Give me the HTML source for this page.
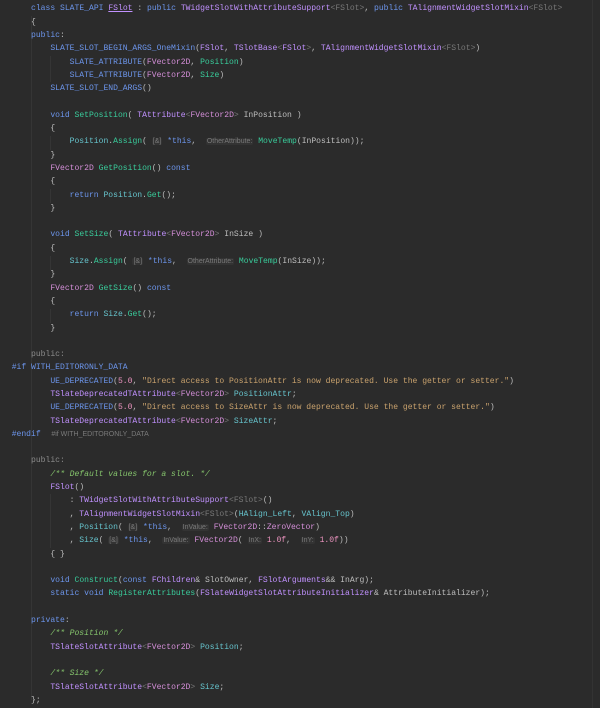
<!DOCTYPE html>
<html><head><meta charset="utf-8"><style>
html,body{margin:0;padding:0;background:#2b2b2b;width:600px;height:708px;overflow:hidden}
pre{position:absolute;left:11.7px;top:2.4px;margin:0;font:8.05px/13.29px "Liberation Mono",monospace;color:#bdbdbd;font-weight:normal;letter-spacing:0}
.k{color:#6c95eb}.c{color:#c191ff}.t{color:#d58fd9}.f{color:#66c3cc}.m{color:#39cc9b}.s{color:#c9a26d}.n{color:#ed94c0}.cm{color:#85c46c;font-style:italic}.g{color:#787878}.d{color:#8a8a8a}
.h{font:7px "Liberation Sans",sans-serif;color:#7a7a7a;background:#333;border-radius:2px;padding:0 1px}
.ig{position:absolute;width:1px;background:#353535}
.rm{position:absolute;left:592px;top:0;width:1px;height:708px;background:#333}
</style></head><body>
<div class="rm"></div>
<div class="ig" style="left:31px;top:16px;height:684px"></div>
<div class="ig" style="left:50px;top:56px;height:26px"></div>
<div class="ig" style="left:50px;top:136px;height:14px"></div>
<div class="ig" style="left:50px;top:189px;height:14px"></div>
<div class="ig" style="left:50px;top:256px;height:14px"></div>
<div class="ig" style="left:50px;top:309px;height:14px"></div>
<div class="ig" style="left:50px;top:494px;height:54px"></div>
<pre>    <span class="k">class</span> <span class="k">SLATE_API</span> <span class="c" style="text-decoration:underline">FSlot</span> : <span class="k">public</span> <span class="c">TWidgetSlotWithAttributeSupport</span><span class="g">&lt;FSlot&gt;</span>, <span class="k">public</span> <span class="c">TAlignmentWidgetSlotMixin</span><span class="g">&lt;FSlot&gt;</span>
    {
    <span class="k">public</span>:
        <span class="k">SLATE_SLOT_BEGIN_ARGS_OneMixin</span>(<span class="c">FSlot</span>, <span class="c">TSlotBase</span><span class="g">&lt;</span><span class="c">FSlot</span><span class="g">&gt;</span>, <span class="c">TAlignmentWidgetSlotMixin</span><span class="g">&lt;FSlot&gt;</span>)
            <span class="k">SLATE_ATTRIBUTE</span>(<span class="t">FVector2D</span>, <span class="m">Position</span>)
            <span class="k">SLATE_ATTRIBUTE</span>(<span class="t">FVector2D</span>, <span class="m">Size</span>)
        <span class="k">SLATE_SLOT_END_ARGS</span>()

        <span class="k">void</span> <span class="m">SetPosition</span>( <span class="c">TAttribute</span><span class="g">&lt;</span><span class="t">FVector2D</span><span class="g">&gt;</span> InPosition )
        {
            <span class="f">Position</span>.<span class="m">Assign</span>( <span class="h">[&amp;]</span> <span class="k">*this</span>,  <span class="h">OtherAttribute:</span> <span class="m">MoveTemp</span>(InPosition));
        }
        <span class="t">FVector2D</span> <span class="m">GetPosition</span>() <span class="k">const</span>
        {
            <span class="k">return</span> <span class="f">Position</span>.<span class="m">Get</span>();
        }

        <span class="k">void</span> <span class="m">SetSize</span>( <span class="c">TAttribute</span><span class="g">&lt;</span><span class="t">FVector2D</span><span class="g">&gt;</span> InSize )
        {
            <span class="f">Size</span>.<span class="m">Assign</span>( <span class="h">[&amp;]</span> <span class="k">*this</span>,  <span class="h">OtherAttribute:</span> <span class="m">MoveTemp</span>(InSize));
        }
        <span class="t">FVector2D</span> <span class="m">GetSize</span>() <span class="k">const</span>
        {
            <span class="k">return</span> <span class="f">Size</span>.<span class="m">Get</span>();
        }

    <span class="d">public:</span>
<span class="k">#if WITH_EDITORONLY_DATA</span>
        <span class="k">UE_DEPRECATED</span>(<span class="n">5.0</span>, <span class="s">"Direct access to PositionAttr is now deprecated. Use the getter or setter."</span>)
        <span class="c">TSlateDeprecatedTAttribute</span><span class="g">&lt;</span><span class="t">FVector2D</span><span class="g">&gt;</span> <span class="f">PositionAttr</span>;
        <span class="k">UE_DEPRECATED</span>(<span class="n">5.0</span>, <span class="s">"Direct access to SizeAttr is now deprecated. Use the getter or setter."</span>)
        <span class="c">TSlateDeprecatedTAttribute</span><span class="g">&lt;</span><span class="t">FVector2D</span><span class="g">&gt;</span> <span class="f">SizeAttr</span>;
<span class="k">#endif</span>  <span class="h" style="background:none">#if WITH_EDITORONLY_DATA</span>

    <span class="d">public:</span>
        <span class="cm">/** Default values for a slot. */</span>
        <span class="c">FSlot</span>()
            : <span class="c">TWidgetSlotWithAttributeSupport</span><span class="g">&lt;FSlot&gt;</span>()
            , <span class="c">TAlignmentWidgetSlotMixin</span><span class="g">&lt;FSlot&gt;</span>(<span class="f">HAlign_Left</span>, <span class="f">VAlign_Top</span>)
            , <span class="f">Position</span>( <span class="h">[&amp;]</span> <span class="k">*this</span>,  <span class="h">InValue:</span> <span class="t">FVector2D</span>::<span class="t">ZeroVector</span>)
            , <span class="f">Size</span>( <span class="h">[&amp;]</span> <span class="k">*this</span>,  <span class="h">InValue:</span> <span class="t">FVector2D</span>( <span class="h">InX:</span> <span class="n">1.0f</span>,  <span class="h">InY:</span> <span class="n">1.0f</span>))
        { }

        <span class="k">void</span> <span class="m">Construct</span>(<span class="k">const</span> <span class="c">FChildren</span>&amp; SlotOwner, <span class="c">FSlotArguments</span>&amp;&amp; InArg);
        <span class="k">static</span> <span class="k">void</span> <span class="m">RegisterAttributes</span>(<span class="c">FSlateWidgetSlotAttributeInitializer</span>&amp; AttributeInitializer);

    <span class="k">private</span>:
        <span class="cm">/** Position */</span>
        <span class="c">TSlateSlotAttribute</span><span class="g">&lt;</span><span class="t">FVector2D</span><span class="g">&gt;</span> <span class="f">Position</span>;

        <span class="cm">/** Size */</span>
        <span class="c">TSlateSlotAttribute</span><span class="g">&lt;</span><span class="t">FVector2D</span><span class="g">&gt;</span> <span class="f">Size</span>;
    };</pre>
</body></html>
